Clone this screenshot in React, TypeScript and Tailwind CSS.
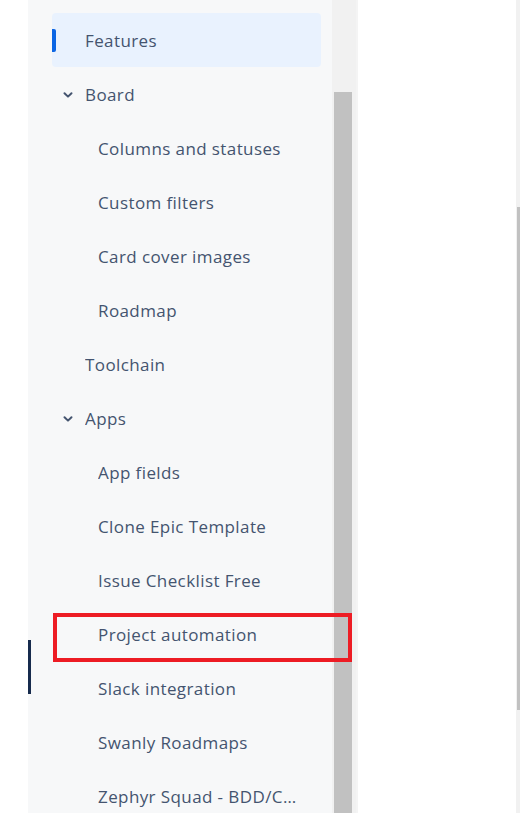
import React from "react";

const Chevron = () => (
  <svg width="12" height="12" viewBox="0 0 12 12" className="shrink-0">
    <path d="M2.5 4.2 L6 7.6 L9.5 4.2" fill="none" stroke="#44546f" strokeWidth="2" strokeLinecap="round" strokeLinejoin="round" />
  </svg>
);

type Item = { label: string; level: 0 | 1; chevron?: boolean; selected?: boolean };

const items: Item[] = [
  { label: "Features", level: 0, selected: true },
  { label: "Board", level: 0, chevron: true },
  { label: "Columns and statuses", level: 1 },
  { label: "Custom filters", level: 1 },
  { label: "Card cover images", level: 1 },
  { label: "Roadmap", level: 1 },
  { label: "Toolchain", level: 0 },
  { label: "Apps", level: 0, chevron: true },
  { label: "App fields", level: 1 },
  { label: "Clone Epic Template", level: 1 },
  { label: "Issue Checklist Free", level: 1 },
  { label: "Project automation", level: 1 },
  { label: "Slack integration", level: 1 },
  { label: "Swanly Roadmaps", level: 1 },
  { label: "Zephyr Squad - BDD/Cucumber for Jira", level: 1 },
];

export default function App() {
  return (
    <div
      className="relative flex h-[813px] w-[520px] overflow-hidden bg-white"
      style={{ fontFamily: '"Open Sans", "Noto Sans", sans-serif' }}
    >
      <div className="w-[28px] shrink-0 bg-white" />
      <div className="w-[304px] shrink-0 bg-[#f7f8f9] pl-[24px] pr-[11px] pt-[13px]">
        {items.map((it) => (
          <div
            key={it.label}
            className={
              it.selected
                ? "relative flex h-[54px] items-center rounded-[4px] bg-[#e9f2fe] pl-[33px] pr-[17px]"
                : it.level === 1
                ? "flex h-[54px] items-center pl-[46px] pr-[17px]"
                : "flex h-[54px] items-center pl-[33px] pr-[17px]"
            }
          >
            {it.selected && (
              <span className="absolute left-0 top-[16px] h-[23px] w-[4px] rounded-r-[2px] bg-[#0c66e4]" />
            )}
            {it.chevron && (
              <span className="-ml-[23px] mr-[11px] flex items-center pt-[2px]">
                <Chevron />
              </span>
            )}
            <span className="truncate pt-[2px] text-[17px] leading-[24px] tracking-[0.4px] text-[#44546f]">{it.label}</span>
          </div>
        ))}
      </div>
      <div className="relative w-[24px] shrink-0 bg-[#f1f1f1]">
        <div className="absolute left-[2px] top-[92px] h-[721px] w-[18px] bg-[#c1c1c1]" />
      </div>
      <div className="w-[2px] shrink-0 bg-[#f4f4f4]" />
      <div className="flex-1 bg-white" />
      <div className="relative w-[4px] shrink-0 bg-[#f1f1f1]">
        <div className="absolute left-[1px] top-[207px] h-[503px] w-[3px] bg-[#c1c1c1]" />
      </div>

      <div className="absolute left-[28px] top-[640px] h-[54px] w-[3px] bg-[#172b4d]" />
      <div className="absolute left-[53px] top-[613px] h-[49px] w-[299px] border-[4px] border-[#ed1c24]" />
    </div>
  );
}
